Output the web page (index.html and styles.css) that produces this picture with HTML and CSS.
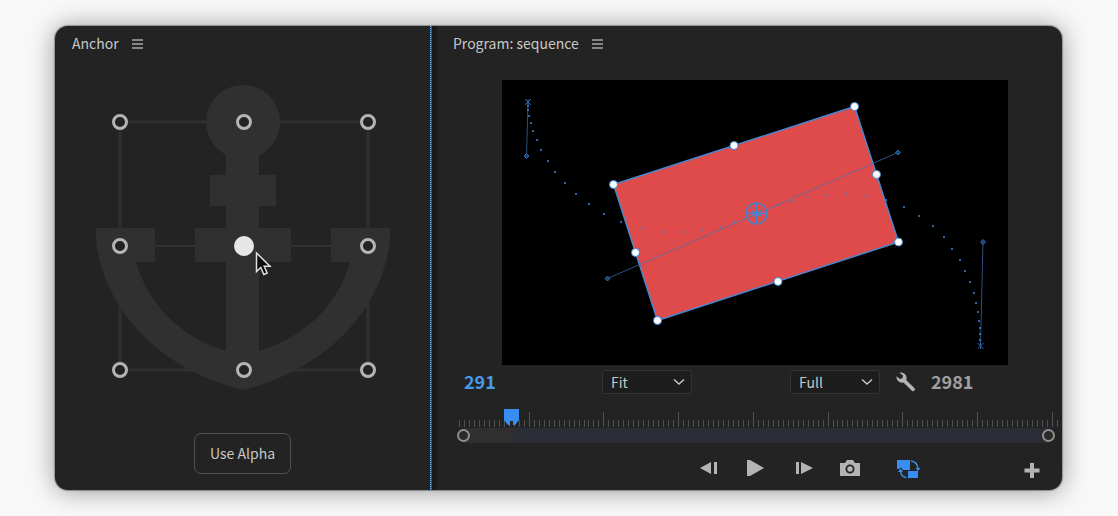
FILE: index.html
```html
<!DOCTYPE html>
<html lang="en">
<head>
    <meta charset="UTF-8">
    <meta name="viewport" content="width=device-width, initial-scale=1.0">
    <title>Anchor</title>
    <link rel="stylesheet" href="styles.css">
</head>
<body>
    <main class="window">
        <section class="panel anchor-panel">
            <header class="panel-header">
                <h2>Anchor</h2>
                <button class="menu" aria-label="Anchor menu"><svg viewBox="0 0 12 10"><path d="M0 1h11M0 5h11M0 9h11"/></svg></button>
            </header>

            <div class="stage">
                <svg class="anchor" viewBox="0 0 294 305" aria-hidden="true">
                    <path class="box" d="M24 37h248v248h-248z"/>
                    <path class="box-middle" d="M24 161h248"/>
                    <circle cx="147" cy="37" r="37"/>
                    <path d="M130 50h33v230h-33zM114 90h66v31h-66zM99 143h96v34h-96z"/>
                    <path d="M0 143h59v34H40C53 222 86 252 130 266h33C208 252 241 222 254 177h-19v-34h59v12C288 215 240 282 147 305C54 282 6 215 0 155z"/>
                </svg>
                <div class="points">
                    <input type="radio" name="point" aria-label="Top left">
                    <input type="radio" name="point" aria-label="Top">
                    <input type="radio" name="point" aria-label="Top right">
                    <input type="radio" name="point" aria-label="Left">
                    <input type="radio" name="point" aria-label="Center" checked>
                    <input type="radio" name="point" aria-label="Right">
                    <input type="radio" name="point" aria-label="Bottom left">
                    <input type="radio" name="point" aria-label="Bottom">
                    <input type="radio" name="point" aria-label="Bottom right">
                </div>
                <svg class="cursor" viewBox="0 0 17 26" aria-hidden="true">
                    <path d="M1.500 2v18.500l4.300-4 3 7 3.400-1.500-3-6.700h5.800z"/>
                </svg>
            </div>

            <button class="alpha">Use Alpha</button>
        </section>

        <div class="divider"></div>

        <section class="panel program-panel">
            <header class="panel-header">
                <h2>Program: sequence</h2>
                <button class="menu" aria-label="Program menu"><svg viewBox="0 0 12 10"><path d="M0 1h11M0 5h11M0 9h11"/></svg></button>
            </header>

            <svg class="monitor" viewBox="0 0 506 285" role="img" aria-label="Sequence preview">
                <path class="clip" d="M111.500 104.500L352.500 26.500L396.500 162L155.500 240.500z"/>
                <path class="tangent" d="M105.500 198.500L396 72.500M26 22L24.500 76M481 162L478.500 266"/>
                <path class="motion" id="motion"/>
                <g class="target">
                    <circle cx="254.500" cy="133.500" r="10.500"/>
                    <path d="M254.500 123v21M244 133.500h21M250 131l9 5M250 136l9-5"/>
                </g>
                <g class="keys">
                    <path d="M23 19l6 6M29 19l-6 6M26 19v7M475.500 263l6 6M481.500 263l-6 6M478.500 262v7"/>
                    <path d="M24.500 73.500l2.500 2.500-2.500 2.500-2.500-2.500zM105.500 196l2.500 2.500-2.500 2.500-2.500-2.500zM396 70l2.500 2.500-2.500 2.500-2.500-2.500zM481 159.500l2.500 2.500-2.500 2.500-2.500-2.500z"/>
                </g>
                <g class="handles">
                    <circle cx="111.500" cy="104.500" r="4"/>
                    <circle cx="232" cy="65.500" r="4"/>
                    <circle cx="352.500" cy="26.500" r="4"/>
                    <circle cx="374.500" cy="94.500" r="4"/>
                    <circle cx="396.500" cy="162" r="4"/>
                    <circle cx="276" cy="201.500" r="4"/>
                    <circle cx="155.500" cy="240.500" r="4"/>
                    <circle cx="133.500" cy="172.500" r="4"/>
                </g>
            </svg>

            <div class="settings">
                <span class="time current">291</span>
                <div class="dropdown">
                    <select aria-label="Zoom level">
                        <option>Fit</option>
                    </select>
                    <svg viewBox="0 0 12 8" aria-hidden="true"><path d="M1 1.500l5 4.500 5-4.500"/></svg>
                </div>
                <div class="dropdown quality">
                    <select aria-label="Playback resolution">
                        <option>Full</option>
                    </select>
                    <svg viewBox="0 0 12 8" aria-hidden="true"><path d="M1 1.500l5 4.500 5-4.500"/></svg>
                </div>
                <button class="icon wrench" aria-label="Settings">
                    <svg viewBox="0 0 20 20"><path d="M3.500.7A5.600 5.600 0 0 1 10.200 8L18.300 16.100A1.700 1.700 0 0 1 15.900 18.700L7.500 10.500A5.600 5.600 0 0 1 .6 4.200L3.800 7 6.500 6.200 7 3.400z"/></svg>
                </button>
                <span class="time">2981</span>
            </div>

            <div class="timeline">
                <svg class="ruler" viewBox="0 0 603 20" aria-hidden="true">
                    <path class="ticks" id="ticks"/>
                    <path class="playhead" d="M49 1h15v11l-4 5h-2v-4h-3v4h-2l-4-5z"/>
                </svg>
                <div class="scrollbar">
                    <span class="played"></span>
                    <span class="knob"></span>
                    <span class="knob"></span>
                </div>
            </div>

            <div class="transport">
                <button class="icon" aria-label="Step back">
                    <svg viewBox="0 0 24 24"><path d="M3 12L14 6v12zM17 6h3v12h-3z"/></svg>
                </button>
                <button class="icon" aria-label="Play">
                    <svg viewBox="0 0 24 24"><path d="M3 4h3l14 8-14 8H3z"/></svg>
                </button>
                <button class="icon" aria-label="Step forward">
                    <svg viewBox="0 0 24 24"><path d="M5 6h3v12H5zM10 6l12 6-12 6z"/></svg>
                </button>
                <button class="icon" aria-label="Export frame">
                    <svg viewBox="0 0 24 24"><path fill-rule="evenodd" d="M2 7h5l2-3h6l2 3h5v13H2zM12 8.500a4.500 4.500 0 1 0 0 9 4.500 4.500 0 1 0 0-9zM12 10.300a2.700 2.700 0 1 1 0 5.400 2.700 2.700 0 1 1 0-5.400z"/></svg>
                </button>
                <button class="icon compare" aria-label="Comparison view">
                    <svg viewBox="0 0 30 24">
                        <path d="M4 4h13v10h-7l-2-2.500L5.500 13H4zM15 15h10v7H15zM22.500 12h5l-2.500 3zM5 16l2.500-3.500 2.500 3.500z"/>
                        <path class="arc" d="M18 5q6.500 1 7 7.500M7.500 15q.5 6 6 6.500"/>
                    </svg>
                </button>
                <button class="icon add" aria-label="Button editor">
                    <svg viewBox="0 0 24 24"><path d="M10 7h4v5.500h5.500v4H14V22h-4v-5.500H4.500v-4H10z"/></svg>
                </button>
            </div>
        </section>
    </main>

    <script>
        const keyPath = [
            [26, 26], [26, 30], [27, 36], [29, 43], [31, 51], [35, 60], [39, 70], [46, 81], [53, 92],
            [63, 103], [74, 114], [87, 124], [102, 134], [119, 142], [140, 148], [160, 152],
            [181, 152], [201, 150], [218, 147], [232, 142], [277, 125], [291, 121], [307, 117],
            [325, 115], [345, 114], [365, 116], [384, 120], [402, 127], [417, 136], [431, 146],
            [442, 157], [450, 169], [458, 180], [463, 191], [468, 202], [472, 213], [474, 223],
            [476, 232], [477, 241], [478, 248], [478, 254], [478, 260]
        ];

        let dots = '';
        for (const [x, y] of keyPath) {
            dots += `M${x} ${y}h.01`;
        }
        document.getElementById('motion').setAttribute('d', dots);

        // 15 frames between two long marks, the first long mark is the 15th
        let ticks = '';
        for (let i = 0; i <= 120; i++) {
            const x = Math.round(4 + i * 4.98) + 0.5;
            const top = i % 15 === 14 ? 4 : 12;
            ticks += `M${x} ${top}V19`;
        }
        document.getElementById('ticks').setAttribute('d', ticks);
    </script>
</body>
</html>
```

FILE: styles.css
```css
* {
    box-sizing: border-box;
}
body {
    margin: 0;
    padding: 26px 56px 26px 55px;
    background: #f8f8f8;
    color: #c8c8c8;
    font-family: "Noto Sans CJK SC", "Open Sans", sans-serif;
    font-size: 14px;
    line-height: 20px;
}
button, select {
    font: inherit;
    color: inherit;
    cursor: pointer;
}
svg {
    display: block;
}
.window {
    display: grid;
    grid-template-columns: 375fr 7px 625fr;
    background: #232323;
    border-radius: 13px;
    overflow: hidden;
    box-shadow: 0 0 1px 1px rgba(0, 0, 0, 0.3), 0 1px 26px rgba(0, 0, 0, 0.4);
}
.panel {
    display: flex;
    flex-direction: column;
}
.panel-header {
    display: flex;
    align-items: center;
    gap: 13px;
    height: 36px;
    padding: 0 17px 2px;
}
.panel-header h2 {
    margin: 0;
    font-size: 14px;
    font-weight: 400;
}
.menu {
    padding: 2px 0 0;
    border: 0;
    background: none;
}
.menu svg {
    width: 12px;
    stroke: #a8a8a8;
    stroke-width: 1.5;
}
.divider {
    background:
        repeating-linear-gradient(#78b0e6 0 1px, #23548f 1px 2px) left / 1px 100% no-repeat,
        linear-gradient(#1f5aa5, #1f5aa5) 1px 0 / 1px 100% no-repeat,
        #17191d;
}

/* anchor */
.anchor-panel {
    align-items: center;
    padding-bottom: 16px;
}
.anchor-panel .panel-header {
    align-self: stretch;
}
.stage {
    position: relative;
    width: 294px;
    margin-top: 23px;
}
.anchor {
    fill: #303030;
}
.box, .box-middle {
    fill: none;
    stroke: #303030;
    stroke-width: 3;
}
.box-middle {
    stroke-width: 2;
}
.points {
    position: absolute;
    top: 27px;
    left: 14px;
    display: grid;
    grid-template-columns: repeat(3, 20px);
    gap: 104px;
}
.points input {
    appearance: none;
    width: 16px;
    height: 16px;
    margin: 2px;
    border: 3px solid #b4b4b4;
    border-radius: 50%;
    background: #232323;
}
.points input:checked {
    width: 20px;
    height: 20px;
    margin: 0;
    border: 0;
    background: #e6e6e6;
}
.cursor {
    position: absolute;
    top: 166px;
    left: 159px;
    width: 17px;
    fill: #0c0c0c;
    stroke: #e0e0e0;
    stroke-width: 1.5;
}
.alpha {
    height: 41px;
    margin-top: 43px;
    padding: 0 15px 2px;
    border: 1px solid #505050;
    border-radius: 7px;
    background: none;
}

/* program */
.program-panel {
    padding-bottom: 10px;
}
.program-panel .panel-header {
    padding: 0 16px 2px;
}
.monitor {
    align-self: stretch;
    margin: 18px 54px 5px 65px;
    background: #000;
}
.clip {
    fill: #df4b4b;
    stroke: #4a86cf;
    stroke-width: 1.5;
}
.tangent {
    fill: none;
    stroke: #3d73b5;
    stroke-opacity: 0.7;
}
.motion {
    stroke: #3f86d6;
    stroke-width: 2;
    stroke-linecap: round;
}
.target {
    fill: none;
    stroke: #4a82cc;
    stroke-width: 1.5;
}
.keys {
    fill: #1d4675;
    stroke: #2f66a6;
}
.handles {
    fill: #fff;
    stroke: #3c86d4;
}
.settings {
    display: grid;
    grid-template-columns: 138fr 90px 98fr 90px 16px 20px 15px 131fr;
    align-items: center;
    height: 24px;
    padding-left: 27px;
}
.time {
    grid-column: 8;
    padding-bottom: 2px;
    font-size: 18px;
    font-weight: 700;
    color: #a0a0a0;
}
.time.current {
    grid-column: 1;
    color: #459ce8;
}
.dropdown {
    position: relative;
}
.dropdown.quality {
    grid-column: 4;
}
.dropdown select {
    display: block;
    appearance: none;
    width: 100%;
    height: 24px;
    padding: 0 8px 1px;
    border: 1px solid #343434;
    border-radius: 3px;
    background: #1d1d1d;
    line-height: 20px;
}
.dropdown svg {
    position: absolute;
    top: 8px;
    right: 7px;
    width: 12px;
    fill: none;
    stroke: #c8c8c8;
    stroke-width: 1.5;
    pointer-events: none;
}
.icon {
    flex: none;
    width: 24px;
    padding: 0;
    border: 0;
    background: none;
    fill: #b4b4b4;
}
.wrench {
    grid-column: 6;
    width: 20px;
}
.timeline {
    margin-top: 14px;
    padding: 0 4px 0 18px;
}
.ticks {
    stroke: #505050;
}
.playhead {
    fill: #378ef0;
}
.scrollbar {
    display: flex;
    align-items: center;
    justify-content: space-between;
    position: relative;
    height: 15px;
    margin: 0 3px 0 2px;
    background: linear-gradient(#2a2d36, #2a2d36) center / calc(100% - 14px) 100% no-repeat;
}
.played {
    position: absolute;
    left: 7px;
    width: 49px;
    height: 100%;
    background: #2f2f2f;
}
.knob {
    position: relative;
    width: 13px;
    height: 13px;
    border: 2px solid #8f8f8f;
    border-radius: 50%;
    background: #2a2a2a;
}
.transport {
    display: flex;
    gap: 23px;
    height: 24px;
    margin-top: 13px;
    padding-right: 18px;
}
.transport::before {
    content: "";
    flex: 237;
}
.compare {
    width: 30px;
    margin-left: 8px;
    fill: #378ef0;
}
.compare .arc {
    fill: none;
    stroke: #378ef0;
    stroke-width: 1.5;
}
.add {
    margin-left: 74px;
}
```
